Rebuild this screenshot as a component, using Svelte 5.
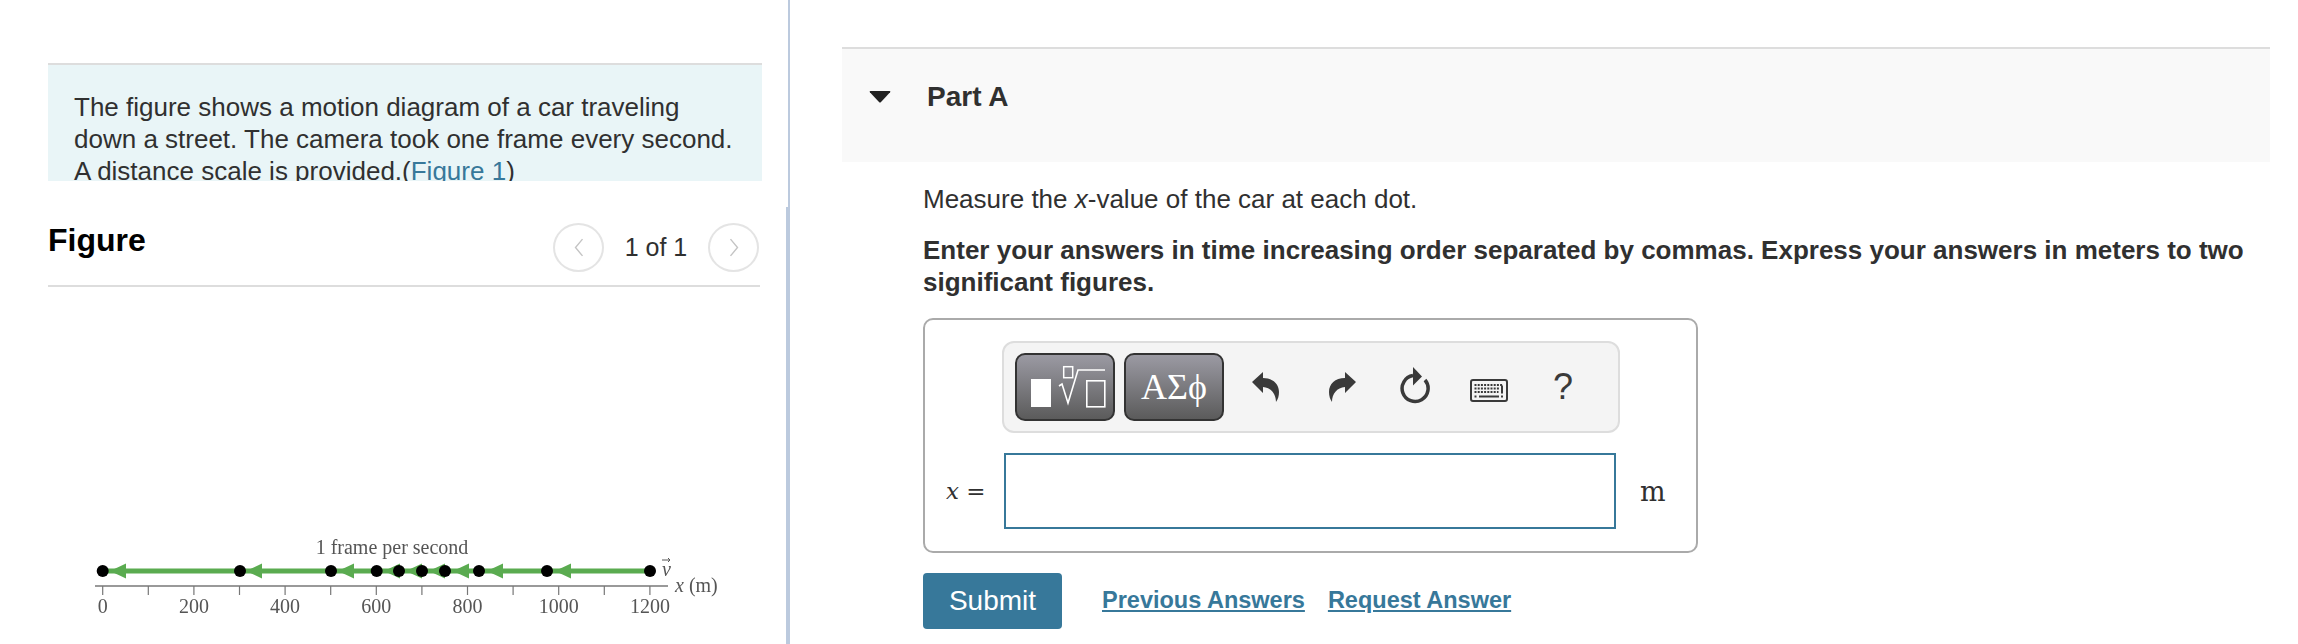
<script>
  const ticks = Array.from({ length: 13 }, (_, i) => 102.7 + i * 45.6);
  const labels = [0, 200, 400, 600, 800, 1000, 1200];
  const dots = [102.7, 240, 331, 376.7, 399, 422, 445, 479, 547, 650];
  const heads = [110, 246, 338, 384, 406, 429, 453, 487, 555];
</script>

<div class="page">
  <section class="left">
    <div class="intro">
      <p>The figure shows a motion diagram of a car traveling down a street. The camera took one frame every second. A distance scale is provided.(<a href="#f">Figure 1</a>)</p>
    </div>
    <header class="fig-head">
      <h2>Figure</h2>
      <div class="pager">
        <button class="round" aria-label="Previous">
          <svg viewBox="0 0 20 30" width="14" height="21"><path d="M15 3 5 15l10 12" fill="none" stroke="#c4c4c4" stroke-width="2"/></svg>
        </button>
        <span>1 of 1</span>
        <button class="round" aria-label="Next">
          <svg viewBox="0 0 20 30" width="14" height="21"><path d="M5 3l10 12L5 27" fill="none" stroke="#c4c4c4" stroke-width="2"/></svg>
        </button>
      </div>
    </header>
    <div class="figure">
      <svg class="diagram" viewBox="80 520 660 124" width="660" height="124">
        <text x="392" y="555" text-anchor="middle" class="cap">1 frame per second</text>
        <line x1="102.7" x2="650" y1="572" y2="572" stroke="#5aab50" stroke-width="5"/>
        {#each heads as h}
          <path d="M{h} 572l16-7.500v15z" fill="#5aab50"/>
        {/each}
        {#each dots as d}
          <circle cx={d} cy="572" r="6" fill="#000"/>
        {/each}
        <line x1="95" x2="668" y1="587" y2="587" stroke="#777" stroke-width="1.6"/>
        {#each ticks as t}
          <line x1={t} x2={t} y1="587" y2="596" stroke="#777" stroke-width="1.2"/>
        {/each}
        {#each labels as l, i}
          <text x={102.7 + i * 91.2} y="614" text-anchor="middle" class="num">{l}</text>
        {/each}
        <text x="662" y="577" class="cap it">v</text>
        <path d="M662 561h8m-2-2 2 2-2 2" fill="none" stroke="#555" stroke-width="1"/>
        <text x="675" y="593" class="cap"><tspan class="it">x</tspan> (m)</text>
      </svg>
    </div>
  </section>

  <div class="rail"><div class="rail-top"></div><div class="rail-low"></div></div>

  <section class="right">
    <div class="part">
      <svg class="caret" viewBox="0 0 22 12" width="22" height="12"><path d="M1.5 0h19q1.5 0 .6 1.2L12 11q-1 1-2 0L.9 1.2Q0 0 1.5 0z" fill="#222"/></svg>
      <h3>Part A</h3>
    </div>
    <div class="body">
      <p class="q">Measure the <i>x</i>-value of the car at each dot.</p>
      <p class="b">Enter your answers in time increasing order separated by commas. Express your answers in meters to two significant figures.</p>
      <div class="answer">
        <div class="toolbar">
          <button class="tbtn" aria-label="Templates">
            <svg viewBox="0 0 96 64" width="96" height="64">
              <rect x="14" y="24" width="20" height="28" fill="#fff"/>
              <rect x="46.700" y="11.700" width="9" height="11" fill="none" stroke="#fff" stroke-width="1.500"/>
              <path d="M42 31l3-2 6 19 10-33h27" fill="none" stroke="#fff" stroke-width="1.600"/>
              <rect x="69.800" y="25.800" width="18" height="26" fill="none" stroke="#fff" stroke-width="1.600"/>
            </svg>
          </button>
          <button class="tbtn sym">ΑΣϕ</button>
          <svg class="ic undo" viewBox="0 0 27 30" width="27" height="30"><path d="M0 10 11 0v6c10 0 16 6 16 14 0 4-1 7-3 10 0-8-5-14.500-13-15v6z" fill="#3a3a3a"/></svg>
          <svg class="ic redo" viewBox="0 0 27 30" width="27" height="30"><path d="M27 10 16 0v6C6 6 0 12 0 20c0 4 1 7 3 10 0-8 5-14.500 13-15v6z" fill="#3a3a3a"/></svg>
          <svg class="ic refresh" viewBox="0 0 32 37" width="32" height="37"><path d="M14 8.600A13 13 0 1 0 26 13" fill="none" stroke="#3a3a3a" stroke-width="3.500"/><path d="M14 0l9 9.500-9 9z" fill="#3a3a3a"/></svg>
          <svg class="ic kbd" viewBox="0 0 38 23" width="38" height="23">
            <rect x="1" y="1" width="36" height="21" rx="2" fill="none" stroke="#3a3a3a" stroke-width="2"/>
            <path d="M4.500 6h28M4.500 9.500h25M4.500 13h24" stroke="#3a3a3a" stroke-width="2" stroke-dasharray="2 1.200" fill="none"/>
            <path d="M32 6.500v8M4.500 17.500h2M9 17.500h20M31 17.500h2" stroke="#3a3a3a" stroke-width="2" fill="none"/>
          </svg>
          <span class="help">?</span>
        </div>
        <div class="row">
          <span class="var"><i>x</i> =</span>
          <div class="input"></div>
          <span class="unit">m</span>
        </div>
      </div>
      <div class="actions">
        <button class="submit">Submit</button>
        <a href="#p">Previous Answers</a>
        <a href="#r">Request Answer</a>
      </div>
    </div>
  </section>
</div>

<style>
  :global(body) { margin: 0; background: #fff; }
  .page {
    display: flex;
    width: 2298px;
    height: 644px;
    overflow: hidden;
    font-family: "Liberation Sans", Arial, sans-serif;
    color: #303030;
  }
  p, h2, h3 { margin: 0; }
  a { color: #37789a; }
  button { font-family: inherit; padding: 0; }

  .left {
    width: 786px;
    flex: none;
    box-sizing: border-box;
    padding: 63px 0 0 48px;
  }
  .rail { width: 4px; flex: none; display: flex; flex-direction: column; align-items: flex-end; }
  .rail-top { width: 2px; height: 207px; background: #bccade; }
  .rail-low { width: 4px; flex: 1; background: #bccade; }
  .intro {
    width: 714px;
    height: 118px;
    box-sizing: border-box;
    overflow: hidden;
    background: #e9f5f7;
    border-top: 2px solid #ddd;
    padding: 26px 20px 0 26px;
    font-size: 26px;
    line-height: 32px;
  }
  .intro a { text-decoration: none; }
  .fig-head {
    width: 712px;
    height: 106px;
    box-sizing: border-box;
    display: flex;
    align-items: center;
    justify-content: space-between;
    padding-top: 16px;
    border-bottom: 2px solid #ddd;
  }
  h2 { font-size: 32px; line-height: 40px; color: #000; margin-bottom: 3px; }
  .pager { display: flex; align-items: center; margin: 13px 1px 0 0; font-size: 25px; }
  .pager span { width: 104px; text-align: center; }
  .round {
    width: 51px;
    height: 49px;
    border-radius: 50%;
    border: 2px solid #e4e4e4;
    background: #fff;
    display: grid;
    place-items: center;
  }
  .figure { margin-left: 32px; margin-top: 232px; }
  .diagram { display: block; filter: blur(0.7px); }
  .cap, .num { font-family: "Liberation Serif", serif; font-size: 20px; fill: #555; }
  .it { font-style: italic; }

  .right { flex: 1; min-width: 0; padding: 47px 28px 0 52px; }
  .part {
    height: 115px;
    box-sizing: border-box;
    background: #f9f9f9;
    border-top: 2px solid #ddd;
    display: flex;
    align-items: center;
    padding: 0 0 18px 27px;
  }
  .caret { flex: none; }
  h3 { font-size: 28px; margin-left: 36px; line-height: 34px; }
  .body { padding: 21px 0 0 81px; }
  .q { font-size: 26px; line-height: 32px; }
  .b { font-size: 26px; line-height: 32px; font-weight: 700; margin-top: 19px; }
  .answer {
    width: 775px;
    height: 235px;
    box-sizing: border-box;
    margin-top: 20px;
    border: 2px solid #aaa;
    border-radius: 10px;
    padding: 21px 0 0 21px;
  }
  .toolbar {
    width: 618px;
    height: 92px;
    box-sizing: border-box;
    background: #f4f4f4;
    border: 2px solid #ddd;
    border-radius: 12px;
    display: flex;
    align-items: center;
    padding-left: 11px;
    margin-left: 56px;
  }
  .tbtn {
    width: 100px;
    height: 68px;
    box-sizing: border-box;
    border: 2px solid #333;
    border-radius: 10px;
    background: linear-gradient(#9b9aa3, #5b5b5b);
    display: grid;
    place-items: center;
    color: #fff;
    flex: none;
  }
  .tbtn svg { display: block; }
  .sym { margin-left: 9px; font-family: "Liberation Serif", serif; font-size: 36px; }
  .ic { flex: none; display: block; }
  .undo { margin-left: 28px; }
  .redo { margin-left: 50px; }
  .refresh { margin-left: 43px; margin-top: -3px; }
  .kbd { margin-left: 39px; margin-top: 7px; }
  .help { margin-left: 45px; font-size: 36px; color: #3a3a3a; }
  .row { display: flex; align-items: center; margin-top: 20px; }
  .var { width: 58px; font-family: "DejaVu Serif", serif; font-size: 23px; white-space: nowrap; }
  .input {
    width: 612px;
    height: 76px;
    box-sizing: border-box;
    border: 2px solid #37789a;
    background: #fff;
  }
  .unit { margin-left: 24px; font-family: "DejaVu Serif", serif; font-size: 27px; font-weight: 300; }
  .actions { display: flex; align-items: center; margin-top: 20px; }
  .submit {
    width: 139px;
    height: 56px;
    border: none;
    border-radius: 4px;
    background: #37789a;
    color: #fff;
    font-size: 28px;
  }
  .actions a { font-weight: 700; font-size: 23.500px; margin-top: -2px; }
  .actions a:first-of-type { margin-left: 40px; }
  .actions a + a { margin-left: 23px; }
</style>
